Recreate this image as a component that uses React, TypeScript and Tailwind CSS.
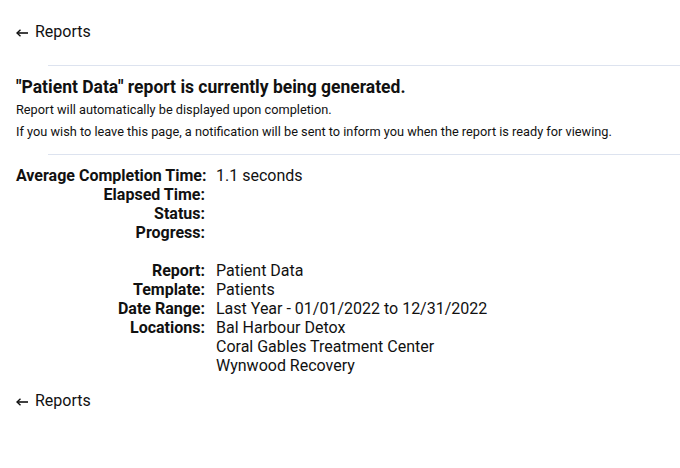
import React from 'react';

const stats: [string, string][] = [
  ['Average Completion Time:', '1.1 seconds'],
  ['Elapsed Time:', ''],
  ['Status:', ''],
  ['Progress:', ''],
];

const details: [string, string[]][] = [
  ['Report:', ['Patient Data']],
  ['Template:', ['Patients']],
  ['Date Range:', ['Last Year - 01/01/2022 to 12/31/2022']],
  ['Locations:', ['Bal Harbour Detox', 'Coral Gables Treatment Center', 'Wynwood Recovery']],
];

function BackLink() {
  return (
    <a href="#" className="flex items-center gap-[7px] text-[16px] leading-[20px] text-[#111]">
      <svg width="12" height="8" viewBox="0 0 12 8" className="mt-[1px]">
        <path d="M1 4H12" stroke="#111" strokeWidth="1.6" />
        <path d="M4.5 0.8L1 4L4.5 7.2" fill="none" stroke="#111" strokeWidth="1.4" />
      </svg>
      <span>Reports</span>
    </a>
  );
}

export default function App() {
  return (
    <main className="min-h-screen bg-white text-[#111] font-['Roboto',sans-serif]">
      <div className="pl-4 pt-[22px]">
        <BackLink />
      </div>

      <hr className="ml-12 mt-[23px] border-t border-[#dde3ef]" />

      <div className="pl-4 pt-[10px]">
        <h1 className="text-[17.5px] font-bold leading-[22px]">"Patient Data" report is currently being generated.</h1>
        <p className="text-[12.75px] leading-[22px] mt-[1px]">Report will automatically be displayed upon completion.</p>
        <p className="text-[12.75px] leading-[22px]">If you wish to leave this page, a notification will be sent to inform you when the report is ready for viewing.</p>
      </div>

      <hr className="ml-12 mt-[11px] border-t border-[#dde3ef]" />

      <div className="pl-4 pt-[11px]">
        <div className="grid grid-cols-[189px_1fr] gap-x-[11px] text-[16px] leading-[19px]">
          {stats.map(([label, value]) => (
            <React.Fragment key={label}>
              <div className="text-right font-bold whitespace-nowrap">{label}</div>
              <div>{value}</div>
            </React.Fragment>
          ))}
        </div>

        <div className="grid grid-cols-[189px_1fr] gap-x-[11px] text-[16px] leading-[19px] mt-[19px]">
          {details.map(([label, values]) => (
            <React.Fragment key={label}>
              <div className="text-right font-bold">{label}</div>
              <div>
                {values.map(v => (
                  <div key={v}>{v}</div>
                ))}
              </div>
            </React.Fragment>
          ))}
        </div>
      </div>

      <div className="pl-4 pt-[16px]">
        <BackLink />
      </div>
    </main>
  );
}
